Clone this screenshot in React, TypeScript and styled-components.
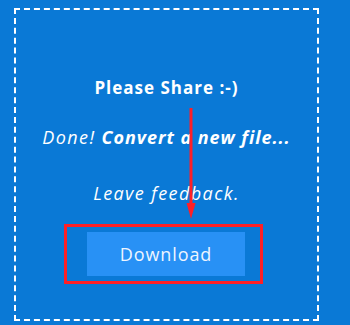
import React from "react";
import styled, { createGlobalStyle } from "styled-components";

const Global = createGlobalStyle`
  html, body { margin: 0; padding: 0; }
  body {
    width: 350px;
    height: 325px;
    background: #0a79d6;
    overflow: hidden;
    font-family: "Open Sans", "DejaVu Sans", sans-serif;
  }
`;

const Page = styled.div`
  width: 350px;
  height: 325px;
  box-sizing: border-box;
  padding: 8px 31px 4px 14px;
`;

const Panel = styled.div`
  position: relative;
  box-sizing: border-box;
  height: 313px;
  border: 2px dashed #ffffff;
  display: flex;
  flex-direction: column;
  align-items: center;
  padding-top: 66px;
  color: #ffffff;
`;

const Title = styled.div`
  font-weight: 700;
  font-size: 17px;
  line-height: 24px;
  letter-spacing: 1px;
`;

const Line = styled.div<{ $gap: number }>`
  margin-top: ${(p) => p.$gap}px;
  font-style: italic;
  font-size: 18px;
  line-height: 24px;
  letter-spacing: 1.4px;
`;

const Strong = styled.span`
  font-weight: 700;
  letter-spacing: 0.95px;
`;

const Highlight = styled.div`
  margin-top: 19px;
  margin-left: -6px;
  border: 3px solid #ff1f26;
  padding: 5px 15px 5px 20px;
`;

const Button = styled.button`
  width: 158px;
  height: 44px;
  border: none;
  background: #2891f5;
  color: #eef5ff;
  font-family: "Open Sans", "DejaVu Sans", sans-serif;
  font-size: 18px;
  letter-spacing: 0.9px;
  display: flex;
  align-items: center;
  justify-content: center;
`;

const Arrow = styled.svg`
  position: absolute;
  left: 168px;
  top: 98px;
`;

export default function App() {
  return (
    <>
      <Global />
      <Page>
        <Panel>
          <Title>Please Share :-)</Title>
          <Line $gap={25}>
            Done! <Strong>Convert a new file...</Strong>
          </Line>
          <Line $gap={32}>Leave feedback.</Line>
          <Highlight>
            <Button>Download</Button>
          </Highlight>
          <Arrow width="14" height="112" viewBox="0 0 14 112">
            <line x1="7" y1="0" x2="7" y2="98" stroke="#ff1f26" strokeWidth="3" />
            <polygon points="2.5,95 11.5,95 7,111" fill="#ff1f26" />
          </Arrow>
        </Panel>
      </Page>
    </>
  );
}
